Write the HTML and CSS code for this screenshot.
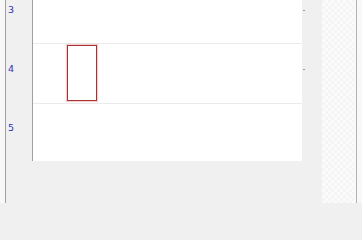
FILE: index.html
```html
<!DOCTYPE html>
<html>
<head>
<meta charset="utf-8">
<link rel="stylesheet" href="styles.css">
</head>
<body>
<div class="edge-left"></div>
<div class="main">
  <div class="sheet-area">
    <div class="gutter">
      <div class="rows">
        <div class="g-row"><span class="num">3</span></div>
        <div class="g-row"><span class="num">4</span></div>
        <div class="g-row"><span class="num">5</span></div>
      </div>
    </div>
    <div class="content">
      <div class="rows">
        <div class="c-row"></div>
        <div class="c-row"><div class="cell-box"></div></div>
        <div class="c-row"></div>
      </div>
    </div>
  </div>
  <div class="overflow">
    <div class="rows">
      <div class="o-row"><span class="mark"></span></div>
      <div class="o-row"><span class="mark"></span></div>
      <div class="o-row"></div>
    </div>
  </div>
  <div class="checker"></div>
</div>
<div class="edge-right"></div>
</body>
</html>
```
FILE: styles.css
```css
html, body {
  margin: 0;
  padding: 0;
  background: #f0f0f0;
}
body {
  width: 362px;
  height: 203px;
  overflow: hidden;
  display: flex;
  font-family: "DejaVu Sans", Verdana, sans-serif;
}
.edge-left {
  width: 5px;
  background: #f8f8f8;
  border-right: 1px solid #a0a0a0;
  flex: none;
}
.main {
  width: 350px;
  flex: none;
  display: flex;
  align-items: flex-start;
  height: 203px;
}
.sheet-area {
  display: flex;
  height: 161px;
  overflow: hidden;
  flex: none;
}
.gutter {
  width: 26px;
  border-right: 1px solid #a0a0a0;
  background: #f0f0f0;
}
.content {
  width: 269px;
  background: #ffffff;
}
.rows {
  margin-top: -15px;
}
.g-row, .c-row, .o-row {
  height: 58px;
  border-bottom: 1px solid transparent;
}
.c-row {
  border-bottom-color: #ebebeb;
}
.g-row {
  padding-left: 2px;
  padding-top: 20px;
  height: 38px;
  box-sizing: content-box;
}
.num {
  display: block;
  font-size: 9.5px;
  line-height: 10px;
  color: #3030b8;
}
.cell-box {
  margin-left: 34px;
  margin-top: 1px;
  width: 28px;
  height: 54px;
  border: 1px solid #a83232;
  box-shadow: 0 0 1px 1px rgba(220, 120, 120, 0.35);
}
.overflow {
  width: 20px;
  flex: none;
  height: 161px;
  overflow: hidden;
}
.o-row {
  padding-top: 25px;
  height: 33px;
}
.mark {
  display: block;
  margin-left: 1px;
  width: 2px;
  height: 1px;
  background: #9a9a9a;
}
.checker {
  width: 34px;
  height: 203px;
  flex: none;
  background-color: #f8f8f8;
  background-image: repeating-conic-gradient(#fbfbfb 0 25%, #f5f5f5 0 50%);
  background-size: 6px 6px;
}
.edge-right {
  width: 5px;
  flex: none;
  background: #f8f8f8;
  border-left: 1px solid #b4b4b4;
}
```
